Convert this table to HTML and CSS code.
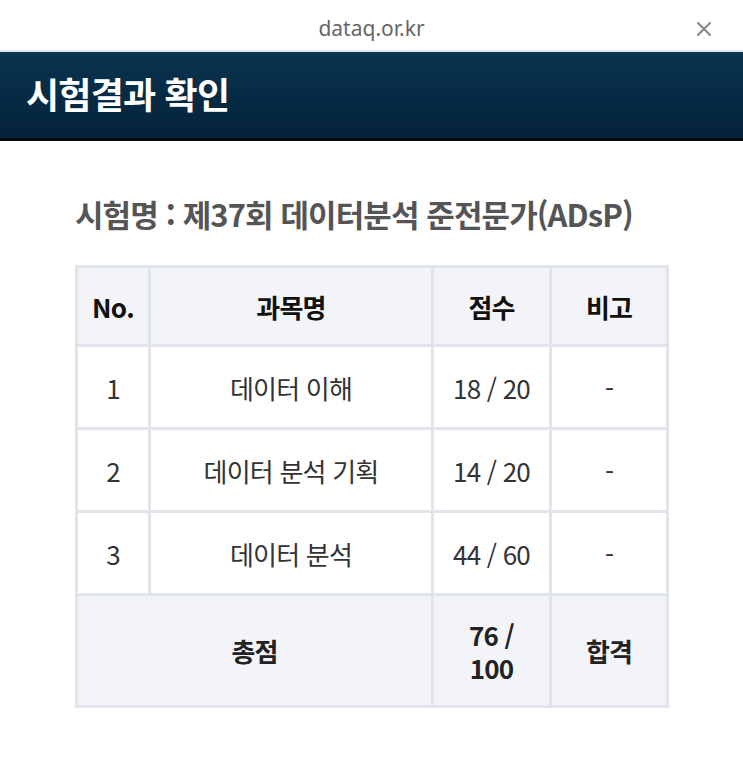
FILE: index.html
```html
<!DOCTYPE html>
<html lang="ko">
<head>
<meta charset="utf-8">
<title>시험결과 확인</title>
<link rel="stylesheet" href="styles.css">
</head>
<body>
<div class="topbar">
  <span class="url">dataq.or.kr</span>
  <span class="close" aria-label="닫기">
    <svg width="16" height="16" viewBox="0 0 16 16"><path d="M2 2L14 14M14 2L2 14" stroke="#8a8a8a" stroke-width="2.2" stroke-linecap="round"/></svg>
  </span>
</div>
<header class="header">
  <h1 class="title">시험결과 확인</h1>
</header>
<main class="content">
  <h2 class="exam">시험명 : 제37회 데이터분석 준전문가(ADsP)</h2>
  <table class="result">
    <colgroup>
      <col class="c1"><col class="c2"><col class="c3"><col class="c4">
    </colgroup>
    <thead>
      <tr><th>No.</th><th>과목명</th><th>점수</th><th>비고</th></tr>
    </thead>
    <tbody>
      <tr><td>1</td><td>데이터 이해</td><td>18 / 20</td><td>-</td></tr>
      <tr><td>2</td><td>데이터 분석 기획</td><td>14 / 20</td><td>-</td></tr>
      <tr><td>3</td><td>데이터 분석</td><td>44 / 60</td><td>-</td></tr>
    </tbody>
    <tfoot>
      <tr><th colspan="2">총점</th><th><span class="line">76 /</span><span class="line">100</span></th><th>합격</th></tr>
    </tfoot>
  </table>
</main>
</body>
</html>
```
FILE: styles.css
```css
html, body {
  margin: 0;
  padding: 0;
  background: #fff;
  font-family: "Noto Sans CJK KR", "Noto Sans", sans-serif;
}
.topbar {
  position: relative;
  height: 50px;
  display: flex;
  align-items: center;
  justify-content: center;
  border-bottom: 2px solid #dde2e7;
}
.url {
  font-family: "Noto Sans", "Noto Sans CJK KR", sans-serif;
  font-size: 21px;
  color: #666;
  padding-top: 6px;
}
.close {
  position: absolute;
  right: 31px;
  top: 21px;
  width: 16px;
  height: 16px;
  display: block;
}
.close svg { display: block; }
.header {
  height: 86px;
  background: linear-gradient(#0a3450, #04223a);
  border-bottom: 3px solid #050a0e;
  display: flex;
  align-items: center;
  padding-left: 26px;
}
.title {
  margin: 0;
  font-size: 36px;
  font-weight: 700;
  color: #fff;
  letter-spacing: -0.8px;
  line-height: 1;
  padding-bottom: 4px;
}
.content {
  padding: 53px 75px 0 75px;
}
.exam {
  margin: 0 0 31px 0;
  font-size: 31px;
  font-weight: 700;
  color: #555;
  line-height: 40px;
  letter-spacing: -0.9px;
}
.result {
  width: 591px;
  border-collapse: collapse;
  table-layout: fixed;
  border: 2px solid #e1e4ea;
}
.c1 { width: 73px; }
.c2 { width: 283px; }
.c3 { width: 118px; }
.c4 { width: 117px; }
.result th, .result td {
  border: 3px solid #e1e4ea;
  text-align: center;
  padding: 0;
  font-size: 26px;
  letter-spacing: -0.8px;
}
.result thead th {
  height: 76px;
  background: #f3f4f7;
  color: #111;
  font-weight: 700;
}
.result tbody td {
  height: 80px;
  color: #333;
  font-weight: 400;
}
.result tfoot th {
  height: 109px;
  background: #f3f4f7;
  color: #222;
  font-weight: 700;
}
.line {
  display: block;
  line-height: 33px;
}
```
